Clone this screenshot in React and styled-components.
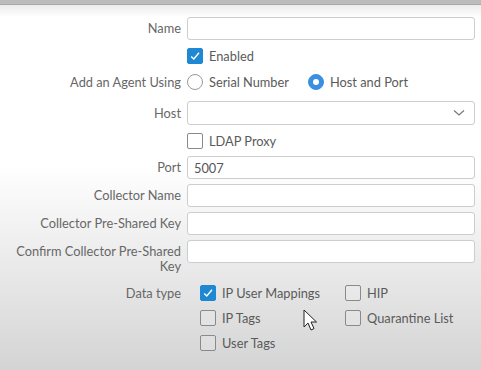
import React from 'react'
import styled, { createGlobalStyle } from 'styled-components'

const Global = createGlobalStyle`
    html, body {
        margin: 0;
        padding: 0;
    }
    body {
        font-family: Lato, "Noto Sans", sans-serif;
        font-size: 12.8px;
        color: #5e5e5e;
    }
`

const Page = styled.div`
    position: relative;
    width: 481px;
    height: 370px;
    overflow: hidden;
    background: linear-gradient(to bottom, #ffffff 0px, #ffffff 165px, #d4d4d4 370px);
`

const TopBar = styled.div`
    height: 4px;
    background: #bcbcbc;
    border-bottom: 1px solid #a9a9a9;
`

const Shade = styled.div`
    height: 12px;
    background: linear-gradient(to bottom, #ececec, rgba(255, 255, 255, 0));
`

const Form = styled.div`
    display: grid;
    grid-template-columns: 181px 288px;
    column-gap: 6px;
    row-gap: 5px;
`

const Label = styled.div`
    text-align: right;
    line-height: 15px;
    padding-top: ${(p) => p.$top || 4}px;
    color: #676767;
`

const Control = styled.div`
    display: flex;
    align-items: ${(p) => (p.$start ? 'flex-start' : 'center')};
    min-height: ${(p) => p.$h || 23}px;
    margin-bottom: ${(p) => p.$after || 0}px;
    gap: 6px;
`

const Input = styled.div`
    box-sizing: border-box;
    width: 288px;
    height: ${(p) => p.$h || 23}px;
    background: #fff;
    border: 1px solid #cdcdcd;
    border-radius: 3px;
    padding: 0 6px;
    display: flex;
    align-items: center;
    justify-content: space-between;
    color: #555;
`

const Box = styled.span`
    box-sizing: border-box;
    width: 16px;
    height: 16px;
    border-radius: 2px;
    flex: none;
    display: inline-flex;
    align-items: center;
    justify-content: center;
    background: ${(p) => (p.$on ? '#1f88d3' : 'rgba(255,255,255,0.15)')};
    border: 1px solid ${(p) => (p.$on ? '#1f88d3' : '#8a8a8a')};
`

const Radio = styled.span`
    box-sizing: border-box;
    width: 16px;
    height: 16px;
    border-radius: 50%;
    flex: none;
    display: inline-flex;
    align-items: center;
    justify-content: center;
    background: ${(p) => (p.$on ? '#3a8fe2' : '#fff')};
    border: 1px solid ${(p) => (p.$on ? '#3a8fe2' : '#9a9a9a')};
    &::after {
        content: '';
        width: 6px;
        height: 6px;
        border-radius: 50%;
        background: #fff;
        display: ${(p) => (p.$on ? 'block' : 'none')};
    }
`

const Option = styled.label`
    display: inline-flex;
    align-items: center;
    gap: 6px;
    margin-left: ${(p) => p.$ml || 0}px;
    color: #5a5a5a;
    white-space: nowrap;
`

const TypeGrid = styled.div`
    display: grid;
    grid-template-columns: 145px auto;
    row-gap: 9px;
    padding-left: 13px;
    padding-top: 6px;
`

const Cursor = styled.svg`
    position: absolute;
    left: 303px;
    top: 309px;
`

const Check = () => (
    <svg width="12" height="12" viewBox="0 0 12 12">
        <path d="M2.2 6.4 L4.8 9 L10 2.8" fill="none" stroke="#fff" strokeWidth="1.4" />
    </svg>
)

const CheckItem = ({ on, children, ml }) => (
    <Option $ml={ml}>
        <Box $on={on}>{on && <Check />}</Box>
        {children}
    </Option>
)

const App = () => (
    <Page>
        <Global />
        <TopBar />
        <Shade />
        <Form>
            <Label>Name</Label>
            <Control><Input /></Control>

            <div />
            <Control $h={22}><CheckItem on>Enabled</CheckItem></Control>

            <Label $top={3}>Add an Agent Using</Label>
            <Control $h={20} $after={4}>
                <Option><Radio />Serial Number</Option>
                <Option $ml={13}><Radio $on />Host and Port</Option>
            </Control>

            <Label $top={5}>Host</Label>
            <Control $h={24}>
                <Input $h={24}>
                    <span />
                    <svg width="12" height="8" viewBox="0 0 12 8" style={{ marginRight: 3 }}>
                        <path d="M1 1.5 L6 6 L11 1.5" fill="none" stroke="#777" strokeWidth="1.2" />
                    </svg>
                </Input>
            </Control>

            <div />
            <Control $h={21}><CheckItem>LDAP Proxy</CheckItem></Control>

            <Label>Port</Label>
            <Control><Input>5007</Input></Control>

            <Label>Collector Name</Label>
            <Control><Input /></Control>

            <Label>Collector Pre-Shared Key</Label>
            <Control><Input /></Control>

            <Label>Confirm Collector Pre-Shared<br />Key</Label>
            <Control $start><Input /></Control>

            <Label $top={7}>Data type</Label>
            <TypeGrid>
                <CheckItem on>IP User Mappings</CheckItem>
                <CheckItem>HIP</CheckItem>
                <CheckItem>IP Tags</CheckItem>
                <CheckItem>Quarantine List</CheckItem>
                <CheckItem>User Tags</CheckItem>
            </TypeGrid>
        </Form>
        <Cursor width="16" height="24" viewBox="0 0 16 24">
            <path d="M1 1 L1 18 L5 14 L8 21 L11 19.6 L8 13 L13.5 13 Z" fill="#fff" stroke="#222" strokeWidth="1" strokeLinejoin="round" />
        </Cursor>
    </Page>
)

export default App
